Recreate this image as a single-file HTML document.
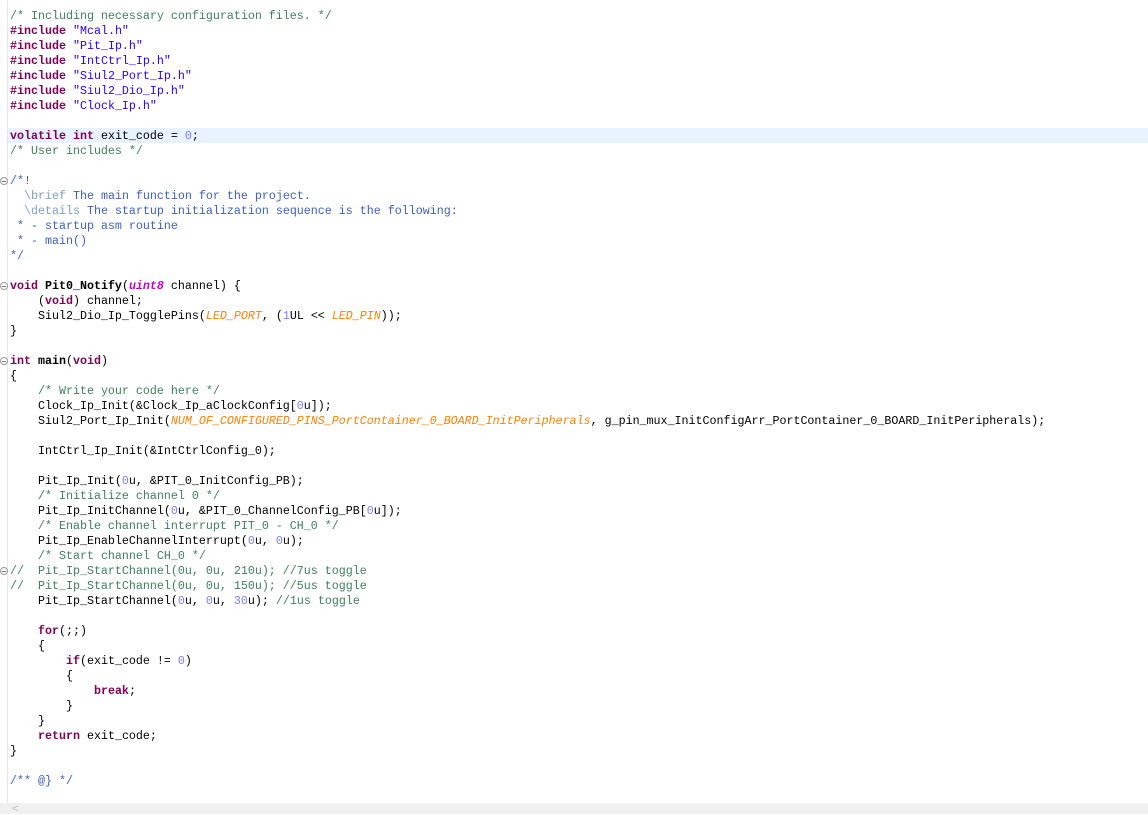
<!DOCTYPE html>
<html><head><meta charset="utf-8"><style>
body{margin:0;width:1148px;height:814px;background:#fff;overflow:hidden;position:relative}
.g{position:absolute;left:7px;top:0;width:1px;height:803px;background:#e8e8e8}
.hl{position:absolute;left:8px;top:128px;width:1140px;height:15px;background:#e8f2fe}
pre{position:absolute;left:10px;top:9px;margin:0;font-family:"Liberation Mono",monospace;font-size:11.67px;line-height:15px;color:#000}
.k{color:#7f0055;font-weight:bold}.c{color:#3f7f5f}.d{color:#3f5fbf}.t{color:#7f9fbf}
.s{color:#2a00ff}.n{color:#7d7dff}.m{color:#ff8000;font-style:italic}.ty{color:#c800c8;font-style:italic;font-weight:bold}.b{font-weight:bold}
.f{position:absolute;left:0;width:8px;height:8px;border:1px solid #999;border-radius:50%;box-sizing:border-box;font-size:0}
.f:after{content:"";position:absolute;left:1px;top:3px;width:4px;height:1px;background:#777}
.sb{position:absolute;left:0;top:803px;width:1148px;height:11px;background:#f0f0f0}
.sb span{position:absolute;left:12px;top:0px;font:11px "Liberation Sans",sans-serif;color:#bbb}
</style></head><body>
<div class="hl"></div><div class="g"></div>
<div class="f" style="top:177px"></div><div class="f" style="top:282px"></div><div class="f" style="top:357px"></div><div class="f" style="top:567px"></div>
<pre><span class="c">/* Including necessary configuration files. */</span>
<span class="k">#include</span> <span class="s">"Mcal.h"</span>
<span class="k">#include</span> <span class="s">"Pit_Ip.h"</span>
<span class="k">#include</span> <span class="s">"IntCtrl_Ip.h"</span>
<span class="k">#include</span> <span class="s">"Siul2_Port_Ip.h"</span>
<span class="k">#include</span> <span class="s">"Siul2_Dio_Ip.h"</span>
<span class="k">#include</span> <span class="s">"Clock_Ip.h"</span>

<span class="k">volatile int</span> exit_code = <span class="n">0</span>;
<span class="c">/* User includes */</span>

<span class="d">/*!</span>
<span class="d">  <span class="t">\brief</span> The main function for the project.</span>
<span class="d">  <span class="t">\details</span> The startup initialization sequence is the following:</span>
<span class="d"> * - startup asm routine</span>
<span class="d"> * - main()</span>
<span class="d">*/</span>

<span class="k">void</span> <span class="b">Pit0_Notify</span>(<span class="ty">uint8</span> channel) {
    (<span class="k">void</span>) channel;
    Siul2_Dio_Ip_TogglePins(<span class="m">LED_PORT</span>, (<span class="n">1</span>UL &lt;&lt; <span class="m">LED_PIN</span>));
}

<span class="k">int</span> <span class="b">main</span>(<span class="k">void</span>)
{
    <span class="c">/* Write your code here */</span>
    Clock_Ip_Init(&amp;Clock_Ip_aClockConfig[<span class="n">0</span>u]);
    Siul2_Port_Ip_Init(<span class="m">NUM_OF_CONFIGURED_PINS_PortContainer_0_BOARD_InitPeripherals</span>, g_pin_mux_InitConfigArr_PortContainer_0_BOARD_InitPeripherals);

    IntCtrl_Ip_Init(&amp;IntCtrlConfig_0);

    Pit_Ip_Init(<span class="n">0</span>u, &amp;PIT_0_InitConfig_PB);
    <span class="c">/* Initialize channel 0 */</span>
    Pit_Ip_InitChannel(<span class="n">0</span>u, &amp;PIT_0_ChannelConfig_PB[<span class="n">0</span>u]);
    <span class="c">/* Enable channel interrupt PIT_0 - CH_0 */</span>
    Pit_Ip_EnableChannelInterrupt(<span class="n">0</span>u, <span class="n">0</span>u);
    <span class="c">/* Start channel CH_0 */</span>
<span class="c">//  Pit_Ip_StartChannel(0u, 0u, 210u); //7us toggle</span>
<span class="c">//  Pit_Ip_StartChannel(0u, 0u, 150u); //5us toggle</span>
    Pit_Ip_StartChannel(<span class="n">0</span>u, <span class="n">0</span>u, <span class="n">30</span>u); <span class="c">//1us toggle</span>

    <span class="k">for</span>(;;)
    {
        <span class="k">if</span>(exit_code != <span class="n">0</span>)
        {
            <span class="k">break</span>;
        }
    }
    <span class="k">return</span> exit_code;
}

<span class="d">/** @} */</span></pre>
<div class="sb"><span>&lt;</span></div>
</body></html>
